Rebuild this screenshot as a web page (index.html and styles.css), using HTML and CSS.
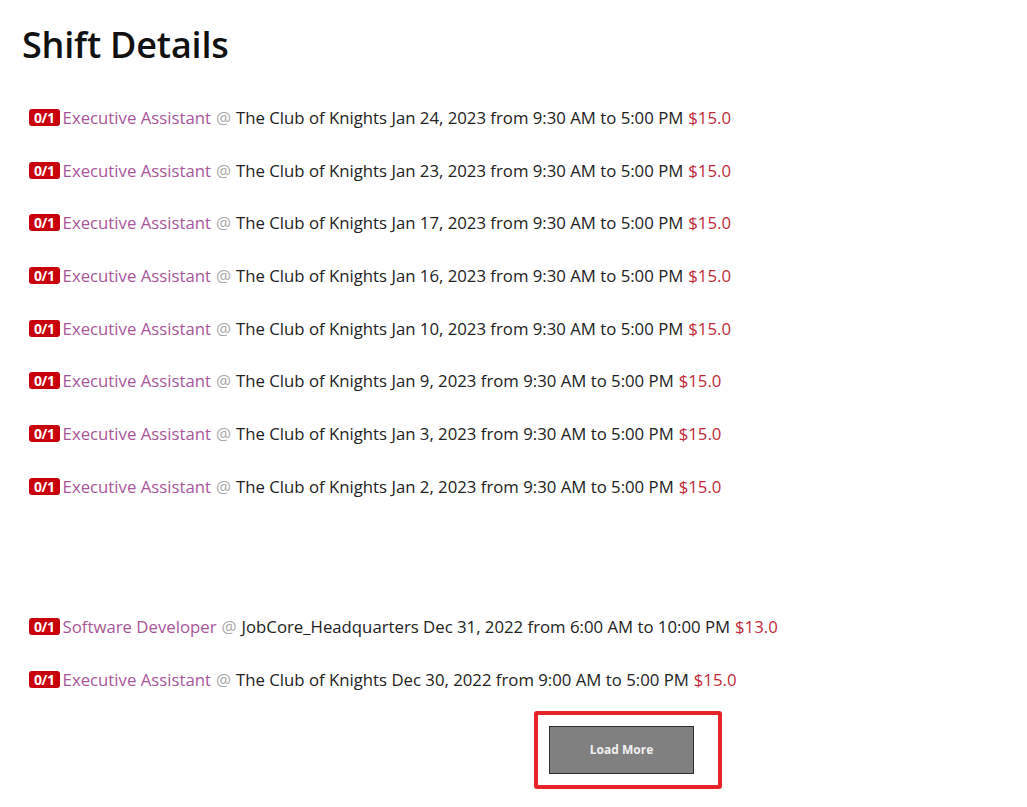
FILE: index.html
```html
<!DOCTYPE html>
<html>
<head>
<meta charset="utf-8">
<link rel="stylesheet" href="styles.css">
</head>
<body>
<div class="page">
  <h2 class="title">Shift Details</h2>
  <div class="list">
    <div class="row"><span class="badge">0/1</span><span class="pos">Executive Assistant</span><span class="at">@</span><span class="info">The Club of Knights Jan 24, 2023 from 9:30 AM to 5:00 PM</span><span class="pay">$15.0</span></div>
    <div class="row"><span class="badge">0/1</span><span class="pos">Executive Assistant</span><span class="at">@</span><span class="info">The Club of Knights Jan 23, 2023 from 9:30 AM to 5:00 PM</span><span class="pay">$15.0</span></div>
    <div class="row"><span class="badge">0/1</span><span class="pos">Executive Assistant</span><span class="at">@</span><span class="info">The Club of Knights Jan 17, 2023 from 9:30 AM to 5:00 PM</span><span class="pay">$15.0</span></div>
    <div class="row"><span class="badge">0/1</span><span class="pos">Executive Assistant</span><span class="at">@</span><span class="info">The Club of Knights Jan 16, 2023 from 9:30 AM to 5:00 PM</span><span class="pay">$15.0</span></div>
    <div class="row"><span class="badge">0/1</span><span class="pos">Executive Assistant</span><span class="at">@</span><span class="info">The Club of Knights Jan 10, 2023 from 9:30 AM to 5:00 PM</span><span class="pay">$15.0</span></div>
    <div class="row"><span class="badge">0/1</span><span class="pos">Executive Assistant</span><span class="at">@</span><span class="info">The Club of Knights Jan 9, 2023 from 9:30 AM to 5:00 PM</span><span class="pay">$15.0</span></div>
    <div class="row"><span class="badge">0/1</span><span class="pos">Executive Assistant</span><span class="at">@</span><span class="info">The Club of Knights Jan 3, 2023 from 9:30 AM to 5:00 PM</span><span class="pay">$15.0</span></div>
    <div class="row"><span class="badge">0/1</span><span class="pos">Executive Assistant</span><span class="at">@</span><span class="info">The Club of Knights Jan 2, 2023 from 9:30 AM to 5:00 PM</span><span class="pay">$15.0</span></div>
  </div>
  <div class="list list-second">
    <div class="row"><span class="badge">0/1</span><span class="pos">Software Developer</span><span class="at">@</span><span class="info">JobCore_Headquarters Dec 31, 2022 from 6:00 AM to 10:00 PM</span><span class="pay">$13.0</span></div>
    <div class="row"><span class="badge">0/1</span><span class="pos">Executive Assistant</span><span class="at">@</span><span class="info">The Club of Knights Dec 30, 2022 from 9:00 AM to 5:00 PM</span><span class="pay">$15.0</span></div>
  </div>
  <div class="more-wrap">
    <div class="highlight">
      <button class="load-more">Load More</button>
    </div>
  </div>
</div>
</body>
</html>
```
FILE: styles.css
```css
html, body {
  margin: 0;
  padding: 0;
  background: #ffffff;
}
body {
  font-family: "Open Sans", "Noto Sans", sans-serif;
  color: #212121;
}
.page {
  padding: 0 0 0 22px;
}
.title {
  margin: 0;
  padding-top: 20px;
  font-size: 36px;
  line-height: 50px;
  font-weight: 600;
  color: #111111;
  letter-spacing: -0.2px;
}
.list {
  margin-top: 21px;
  padding-left: 7px;
}
.list-second {
  margin-top: 88px;
}
.row {
  height: 52.7px;
  display: flex;
  align-items: center;
  font-size: 16.75px;
  white-space: nowrap;
}
.badge {
  display: inline-block;
  background: #c8000a;
  color: #ffffff;
  font-weight: 700;
  font-size: 14px;
  line-height: 17px;
  padding: 0 5px;
  border-radius: 3px;
  margin-right: 3px;
  letter-spacing: -0.4px;
}
.pos {
  color: #a8569a;
}
.at {
  color: #a9a9a9;
  margin: 0 5px 0 5px;
}
.info {
  color: #222222;
}
.pay {
  color: #bf2a3a;
  margin-left: 5px;
}
.more-wrap {
  display: flex;
  padding-left: 512px;
  margin-top: 5px;
}
.highlight {
  border: 4px solid #e8232a;
  border-radius: 3px;
  padding: 11px 24px 11px 11px;
}
.load-more {
  display: block;
  width: 145px;
  height: 48px;
  background: #808080;
  border: 1px solid #2e2e2e;
  color: #f0f0f0;
  font-family: "Open Sans", "Noto Sans", sans-serif;
  font-size: 12px;
  font-weight: 700;
  padding: 0;
}
```
